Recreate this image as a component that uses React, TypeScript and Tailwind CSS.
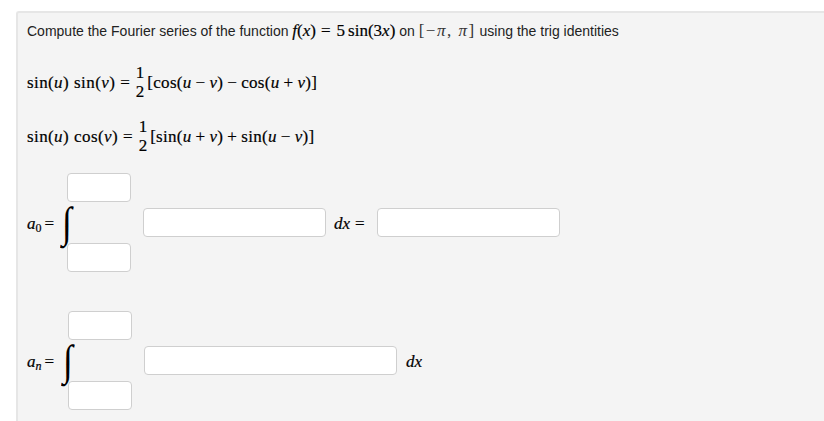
import React from "react";

const m1 = "font-[Liberation_Serif] text-[17px] leading-none text-black [-webkit-text-stroke:0.2px_#000]";

function I({ children }: { children: React.ReactNode }) {
  return <span className="italic">{children}</span>;
}
function Op({ c, w = "mx-[4px]" }: { c: string; w?: string }) {
  return <span className={w}>{c}</span>;
}
function Eq() {
  return <span className="ml-[5px] mr-[6px]">=</span>;
}

function Box({ cls }: { cls: string }) {
  return <div className={`bg-white border border-[#cfcfcf] rounded-[4px] ${cls}`} />;
}

function Frac() {
  return (
    <span className="inline-flex flex-col items-center mr-[3px] text-[17px] leading-[19px]">
      <span className="block">1</span>
      <span className="block">2</span>
    </span>
  );
}

function Integral() {
  return (
    <div className="flex flex-col items-start">
      <Box cls="w-[64px] h-[29px]" />
      <div className="h-[41px] -ml-[5px] flex items-center overflow-visible">
        <span className="font-[Liberation_Serif] italic text-[36px] leading-none inline-block scale-y-[1.2] text-black">
          ∫
        </span>
      </div>
      <Box cls="w-[64px] h-[29px]" />
    </div>
  );
}

export default function App() {
  return (
    <div className="w-[824px] h-[421px] bg-white pt-[11px] pl-[16px] overflow-hidden">
      <div className="h-[420px] bg-[#f4f4f4] border-t-2 border-l-2 border-[#e6e6e6] rounded-tl-[3px] pl-[9px] pt-[9px] text-[#111]">
        <div className="font-[Liberation_Sans] text-[14px] leading-[16px] flex items-center text-[#222]">
          <span>Compute the Fourier series of the function&nbsp;</span>
          <span className={m1}>
            <I>f</I>(<I>x</I>)<Eq />5<span className="ml-[3px]">sin</span>(3<I>x</I>)
          </span>
          <span>&nbsp;on&nbsp;</span>
          <span className="font-[Liberation_Serif] text-[17px] leading-none tracking-[1.5px] text-[#333]">
            [−<I>π</I>, <I>π</I>]
          </span>
          <span>&nbsp;using the trig identities</span>
        </div>

        <div className={`mt-[25px] flex items-center h-[36px] ${m1}`}>
          <span className="tracking-[0.4px]">
            sin(<I>u</I>)<span className="ml-[5px]">sin</span>(<I>v</I>)
          </span>
          <Eq />
          <Frac />
          <span className="tracking-[0.3px]">
            [cos(<I>u</I>
            <Op c="−" />
            <I>v</I>)<Op c="−" />cos(<I>u</I>
            <Op c="+" />
            <I>v</I>)]
          </span>
        </div>

        <div className={`mt-[18px] flex items-center h-[36px] ${m1}`}>
          <span className="tracking-[0.4px]">
            sin(<I>u</I>)<span className="ml-[5px]">cos</span>(<I>v</I>)
          </span>
          <Eq />
          <Frac />
          <span className="tracking-[0.3px]">
            [sin(<I>u</I>
            <Op c="+" />
            <I>v</I>)<Op c="+" />sin(<I>u</I>
            <Op c="−" />
            <I>v</I>)]
          </span>
        </div>

        <div className="mt-[19px] flex items-center">
          <div className="w-[40px]">
            <span className={m1}>
              <I>a</I>
              <sub className="text-[12px] not-italic">0</sub>
              <span className="ml-[3px]">=</span>
            </span>
          </div>
          <Integral />
          <Box cls="ml-[12px] w-[183px] h-[29px]" />
          <div className="ml-[8px] w-[43px]">
            <span className={m1}>
              <I>dx</I>
              <span className="ml-[5px]">=</span>
            </span>
          </div>
          <Box cls="w-[183px] h-[29px]" />
        </div>

        <div className="mt-[39px] flex items-center">
          <div className="w-[41px]">
            <span className={m1}>
              <I>a</I>
              <sub className="text-[12px] italic">n</sub>
              <span className="ml-[3px]">=</span>
            </span>
          </div>
          <Integral />
          <Box cls="ml-[12px] w-[253px] h-[29px]" />
          <div className="ml-[9px]">
            <span className={m1}>
              <I>dx</I>
            </span>
          </div>
        </div>
      </div>
    </div>
  );
}
